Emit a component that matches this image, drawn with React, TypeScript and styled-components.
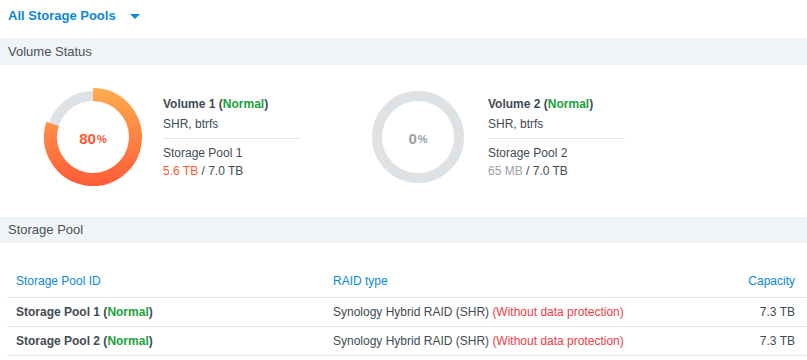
import React from "react";
import styled, { createGlobalStyle } from "styled-components";

const GlobalStyle = createGlobalStyle`
  html, body { margin: 0; padding: 0; background: #ffffff; }
  body { font-family: "Liberation Sans", Arial, Helvetica, sans-serif; color: #414b55; }
  * { box-sizing: border-box; }
`;

const Page = styled.div`
  width: 807px;
  height: 360px;
  overflow: hidden;
  background: #fff;
`;

const TopBar = styled.div`
  height: 38px;
  padding: 8px 0 0 8px;
  display: flex;
  align-items: flex-start;
`;

const PoolSelect = styled.div`
  font-size: 13px;
  line-height: 16px;
  font-weight: 700;
  color: #0a87e0;
  display: flex;
  align-items: center;
  gap: 14px;
`;

const Caret = styled.span`
  width: 0;
  height: 0;
  border-left: 5px solid transparent;
  border-right: 5px solid transparent;
  border-top: 5px solid #0a87e0;
  margin-top: 1px;
`;

const SectionHeader = styled.div<{ $h: number }>`
  height: ${(p) => p.$h}px;
  line-height: ${(p) => p.$h}px;
  padding-left: 8px;
  background: #f1f4f7;
  font-size: 13px;
  color: #4a5159;
`;

const VolumeArea = styled.div`
  height: 152px;
  display: flex;
  align-items: center;
  padding: 0 0 8px 44px;
`;

const VolumeCard = styled.div`
  width: 325px;
  display: flex;
  align-items: center;
  gap: 21px;
`;

const DonutWrap = styled.div`
  position: relative;
  width: 98px;
  height: 98px;
  flex: none;
`;

const DonutLabel = styled.div<{ $color: string }>`
  position: absolute;
  inset: 0;
  display: flex;
  align-items: center;
  justify-content: center;
  color: ${(p) => p.$color};
  font-weight: 700;
  font-size: 15px;
  padding-top: 2px;
`;

const Pct = styled.span`
  font-size: 11px;
  font-weight: 700;
  margin-left: 1px;
  margin-top: 2px;
`;

const Info = styled.div`
  width: 137px;
  font-size: 12px;
  color: #414b55;
`;

const Line = styled.div<{ $lh?: number }>`
  line-height: ${(p) => p.$lh ?? 20}px;
  white-space: nowrap;
`;

const Title = styled(Line)`
  font-weight: 700;
`;

const Divider = styled.div`
  height: 1px;
  background: #e3e7eb;
  margin: 4px 0 5px;
`;

const Normal = styled.span`
  color: #1aa23a;
  font-weight: 700;
`;

const Used = styled.span<{ $color: string }>`
  color: ${(p) => p.$color};
`;

const Table = styled.div`
  margin: 25px 0 0 7px;
  font-size: 12px;
`;

const Row = styled.div<{ $head?: boolean }>`
  display: grid;
  grid-template-columns: 317px 1fr auto;
  align-items: center;
  height: ${(p) => (p.$head ? 30 : 29)}px;
  padding-bottom: ${(p) => (p.$head ? 4 : 0)}px;
  border-bottom: 1px solid #e1e6eb;
  color: ${(p) => (p.$head ? "#0a87e0" : "#414b55")};
`;

const Cell = styled.div<{ $right?: boolean; $bold?: boolean }>`
  padding: ${(p) => (p.$right ? "0 12px 0 0" : "0 0 0 9px")};
  text-align: ${(p) => (p.$right ? "right" : "left")};
  font-weight: ${(p) => (p.$bold ? 700 : 400)};
  white-space: nowrap;
`;

const Warn = styled.span`
  color: #f23b48;
`;

const Donut: React.FC<{ pct: number; id: string }> = ({ pct, id }) => {
  const r = 42.5;
  const a = (Math.min(pct, 99.99) / 100) * 2 * Math.PI;
  const ex = 49 + r * Math.sin(a);
  const ey = 49 - r * Math.cos(a);
  const large = pct > 50 ? 1 : 0;
  return (
    <svg width="98" height="98" viewBox="0 0 98 98">
      <defs>
        <linearGradient id={id} x1="0" y1="0" x2="0" y2="98" gradientUnits="userSpaceOnUse">
          <stop offset="0" stopColor="#ffac4e" />
          <stop offset="1" stopColor="#ff5b37" />
        </linearGradient>
      </defs>
      <circle cx="49" cy="49" r="41" fill="none" stroke="#dfe2e5" strokeWidth="10" />
      {pct > 0 && (
        <path
          d={`M 49 ${49 - r} A ${r} ${r} 0 ${large} 1 ${ex.toFixed(2)} ${ey.toFixed(2)}`}
          fill="none"
          stroke={`url(#${id})`}
          strokeWidth="13"
        />
      )}
    </svg>
  );
};

const volumes = [
  { name: "Volume 1", pool: "Storage Pool 1", used: "5.6 TB", total: "7.0 TB", pct: 80, usedColor: "#ff5a2e", labelColor: "#fa5530" },
  { name: "Volume 2", pool: "Storage Pool 2", used: "65 MB", total: "7.0 TB", pct: 0, usedColor: "#9aa0a6", labelColor: "#9aa0a6" },
];

const pools = [
  { name: "Storage Pool 1", cap: "7.3 TB" },
  { name: "Storage Pool 2", cap: "7.3 TB" },
];

export default function App() {
  return (
    <Page>
      <GlobalStyle />
      <TopBar>
        <PoolSelect>
          All Storage Pools
          <Caret />
        </PoolSelect>
      </TopBar>
      <SectionHeader $h={27}>Volume Status</SectionHeader>
      <VolumeArea>
        {volumes.map((v, i) => (
          <VolumeCard key={v.name}>
            <DonutWrap>
              <Donut pct={v.pct} id={`grad${i}`} />
              <DonutLabel $color={v.labelColor}>
                {v.pct}
                <Pct>%</Pct>
              </DonutLabel>
            </DonutWrap>
            <Info>
              <Title>
                {v.name} (<Normal>Normal</Normal>)
              </Title>
              <Line>SHR, btrfs</Line>
              <Divider />
              <Line $lh={18}>{v.pool}</Line>
              <Line $lh={18}>
                <Used $color={v.usedColor}>{v.used}</Used> / {v.total}
              </Line>
            </Info>
          </VolumeCard>
        ))}
      </VolumeArea>
      <SectionHeader $h={26}>Storage Pool</SectionHeader>
      <Table>
        <Row $head>
          <Cell>Storage Pool ID</Cell>
          <Cell>RAID type</Cell>
          <Cell $right>Capacity</Cell>
        </Row>
        {pools.map((p) => (
          <Row key={p.name}>
            <Cell $bold>
              {p.name} (<Normal>Normal</Normal>)
            </Cell>
            <Cell>
              Synology Hybrid RAID (SHR) <Warn>(Without data protection)</Warn>
            </Cell>
            <Cell $right>{p.cap}</Cell>
          </Row>
        ))}
      </Table>
    </Page>
  );
}
